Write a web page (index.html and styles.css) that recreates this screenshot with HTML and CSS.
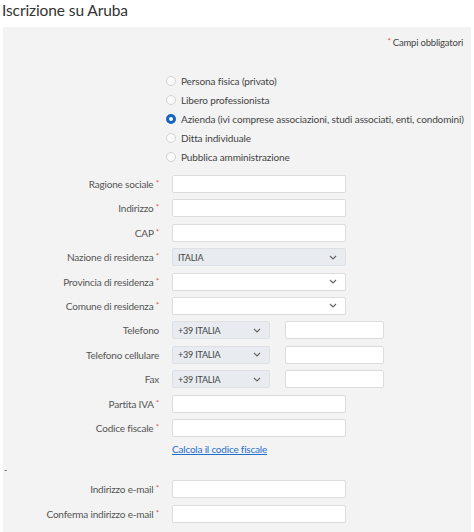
FILE: index.html
```html
<!DOCTYPE html>
<html lang="it">
<head>
<meta charset="utf-8">
<title>Iscrizione su Aruba</title>
<link rel="stylesheet" href="styles.css">
</head>
<body>
<h1 class="title">Iscrizione su Aruba</h1>
<div class="panel">
  <p class="required-note"><span class="ast">*</span> Campi obbligatori</p>
  <ul class="radios">
    <li><span class="radio"></span>Persona fisica (privato)</li>
    <li><span class="radio"></span>Libero professionista</li>
    <li><span class="radio checked"></span>Azienda (ivi comprese associazioni, studi associati, enti, condomini)</li>
    <li><span class="radio"></span>Ditta individuale</li>
    <li><span class="radio"></span>Pubblica amministrazione</li>
  </ul>
  <div class="form">
    <div class="row"><label>Ragione sociale <span class="ast">*</span></label><div class="input"></div></div>
    <div class="row"><label>Indirizzo <span class="ast">*</span></label><div class="input"></div></div>
    <div class="row"><label>CAP <span class="ast">*</span></label><div class="input"></div></div>
    <div class="row"><label>Nazione di residenza <span class="ast">*</span></label><div class="input select filled"><span>ITALIA</span><svg class="chev" viewBox="0 0 8 5"><path d="M1 1l3 3 3-3"/></svg></div></div>
    <div class="row"><label>Provincia di residenza <span class="ast">*</span></label><div class="input select"><span></span><svg class="chev" viewBox="0 0 8 5"><path d="M1 1l3 3 3-3"/></svg></div></div>
    <div class="row"><label>Comune di residenza <span class="ast">*</span></label><div class="input select"><span></span><svg class="chev" viewBox="0 0 8 5"><path d="M1 1l3 3 3-3"/></svg></div></div>
    <div class="row"><label>Telefono</label><div class="phone"><div class="input select filled prefix"><span>+39 ITALIA</span><svg class="chev" viewBox="0 0 8 5"><path d="M1 1l3 3 3-3"/></svg></div><div class="input number"></div></div></div>
    <div class="row"><label>Telefono cellulare</label><div class="phone"><div class="input select filled prefix"><span>+39 ITALIA</span><svg class="chev" viewBox="0 0 8 5"><path d="M1 1l3 3 3-3"/></svg></div><div class="input number"></div></div></div>
    <div class="row"><label>Fax</label><div class="phone"><div class="input select filled prefix"><span>+39 ITALIA</span><svg class="chev" viewBox="0 0 8 5"><path d="M1 1l3 3 3-3"/></svg></div><div class="input number"></div></div></div>
    <div class="row"><label>Partita IVA <span class="ast">*</span></label><div class="input"></div></div>
    <div class="row"><label>Codice fiscale <span class="ast">*</span></label><div class="input"></div></div>
    <div class="row link-row"><label></label><a href="#" class="link">Calcola il codice fiscale</a></div>
  </div>
  <div class="dash">-</div>
  <div class="form">
    <div class="row"><label>Indirizzo e-mail <span class="ast">*</span></label><div class="input"></div></div>
    <div class="row"><label>Conferma indirizzo e-mail <span class="ast">*</span></label><div class="input"></div></div>
  </div>
</div>
</body>
</html>
```
FILE: styles.css
```css
* { box-sizing: border-box; }
body {
  margin: 0;
  background: #fff;
  font-family: Lato, "Open Sans", sans-serif;
  color: #444;
  letter-spacing: -0.2px;
}
.title {
  margin: 0;
  padding: 0 0 0 2px;
  font-size: 15.5px;
  font-weight: 400;
  line-height: 20px;
  color: #333;
  letter-spacing: -0.1px;
}
.panel {
  margin: 7px 3px 0 3px;
  background: #f3f3f3;
  padding: 8px 0 20px 0;
  min-height: 520px;
}
.required-note {
  margin: 0;
  padding-right: 8px;
  text-align: right;
  font-size: 9.5px;
  line-height: 12px;
  color: #444;
}
.ast { color: #d9534f; font-size: 8px; vertical-align: 2px; }
.radios {
  list-style: none;
  margin: 22px 0 0 0;
  padding: 0 0 0 163px;
}
.radios li {
  display: flex;
  align-items: center;
  height: 19px;
  font-size: 10px;
  color: #444;
  white-space: nowrap;
  letter-spacing: -0.12px;
}
.radio {
  width: 10px;
  height: 10px;
  border-radius: 50%;
  border: 1px solid #d3d3d3;
  background: #fafafa;
  margin-right: 5px;
  flex: none;
}
.radio.checked {
  border: 3px solid #1565c0;
  background: #fff;
}
.form {
  display: flex;
  flex-direction: column;
  gap: 6.4px;
}
.radios + .form { margin-top: 9px; }
.row {
  display: flex;
  align-items: center;
  height: 18px;
}
.row label {
  width: 156px;
  flex: none;
  text-align: right;
  font-size: 10px;
  color: #555;
  margin-right: 13px;
}
.input {
  width: 174px;
  height: 18px;
  background: #fff;
  border: 1px solid #dcdcdc;
  border-radius: 2px;
}
.select {
  display: flex;
  align-items: center;
  justify-content: space-between;
  padding: 0 8px 0 5px;
  font-size: 9px;
  color: #444;
}
.select.filled { background: #e8ebef; border-color: #dde0e4; }
.chev {
  width: 8px;
  height: 5px;
  fill: none;
  stroke: #666;
  stroke-width: 1.2;
}
.phone { display: flex; gap: 15px; }
.prefix { width: 98px; }
.number { width: 99px; }
.link-row { height: 14px; margin-top: -1px; }
.link {
  font-size: 10px;
  color: #1f6fd1;
  text-decoration: underline;
}
.dash {
  font-size: 9px;
  line-height: 10px;
  height: 10px;
  padding-left: 1px;
  margin: 9px 0 5px 0;
  color: #555;
}
```
